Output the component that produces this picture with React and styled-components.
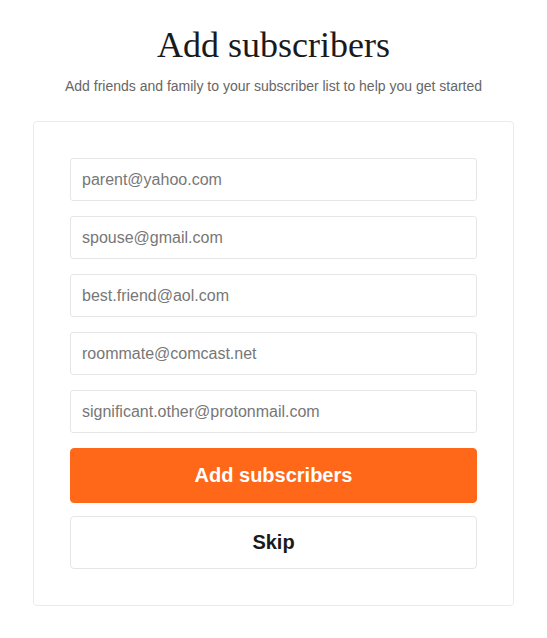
import React from "react";
import { styled, createGlobalStyle } from "styled-components";

const Global = createGlobalStyle`
  * { box-sizing: border-box; }
  body {
    margin: 0;
    background: #fff;
    font-family: "Liberation Sans", Arial, sans-serif;
  }
`;

const Page = styled.div`
  display: flex;
  flex-direction: column;
  align-items: center;
  padding-top: 24px;
`;

const Title = styled.h1`
  margin: 0;
  font-family: "Liberation Serif", "DejaVu Serif", serif;
  font-weight: 400;
  font-size: 36px;
  line-height: 42px;
  color: #1a1a1a;
`;

const Subtitle = styled.p`
  margin: 11px 0 0;
  font-size: 14px;
  line-height: 18px;
  color: #666;
`;

const Card = styled.div`
  margin-top: 26px;
  width: 481px;
  padding: 36px;
  border: 1px solid #ebebeb;
  border-radius: 4px;
  background: #fff;
  display: flex;
  flex-direction: column;
`;

const Input = styled.input`
  height: 43px;
  width: 100%;
  padding: 0 11px;
  margin-bottom: 15px;
  border: 1px solid #e6e6e6;
  border-radius: 3px;
  font-family: "Liberation Sans", Arial, sans-serif;
  font-size: 16px;
  color: #333;
  outline: none;
  &::placeholder { color: #777; }
`;

const Button = styled.button`
  height: ${(p) => (p.$primary ? "55px" : "53px")};
  width: 100%;
  margin-top: ${(p) => (p.$primary ? "0" : "13px")};
  border: 1px solid ${(p) => (p.$primary ? "#ff6719" : "#e6e6e6")};
  border-radius: 4px;
  background: ${(p) => (p.$primary ? "#ff6719" : "#fff")};
  color: ${(p) => (p.$primary ? "#fff" : "#1a1a1a")};
  font-family: "Liberation Sans", Arial, sans-serif;
  font-weight: 700;
  font-size: 20px;
  cursor: pointer;
`;

const emails = [
  "parent@yahoo.com",
  "spouse@gmail.com",
  "best.friend@aol.com",
  "roommate@comcast.net",
  "significant.other@protonmail.com",
];

export default function App() {
  return (
    <>
      <Global />
      <Page>
        <Title>Add subscribers</Title>
        <Subtitle>Add friends and family to your subscriber list to help you get started</Subtitle>
        <Card>
          {emails.map((e) => (
            <Input key={e} type="email" placeholder={e} />
          ))}
          <Button $primary>Add subscribers</Button>
          <Button>Skip</Button>
        </Card>
      </Page>
    </>
  );
}
